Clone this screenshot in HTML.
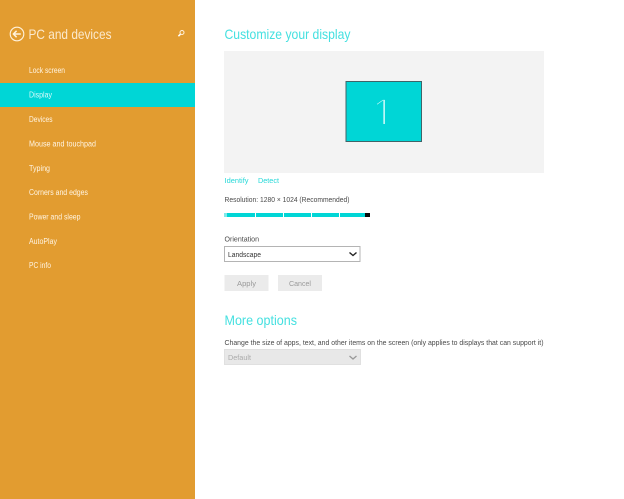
<!DOCTYPE html>
<html>
<head>
<meta charset="utf-8">
<style>
html,body{margin:0;padding:0;background:#fff;width:624px;height:499px;overflow:hidden}
svg{display:block;filter:blur(0.3px)}
text{font-family:"Liberation Sans",sans-serif}
.n{font-size:7.8px;fill:#fff4e2}
.h{font-size:14px;fill:#45e0e0}
.d{font-size:7.6px;fill:#4a4a4a}
</style>
</head>
<body>
<svg width="624" height="499" viewBox="0 0 624 499" xmlns="http://www.w3.org/2000/svg">
<defs><clipPath id="c"><rect x="346" y="82" width="75" height="42"/></clipPath></defs>
<rect x="0" y="0" width="624" height="499" fill="#fff"/>
<rect x="0" y="0" width="195" height="499" fill="#e29c30"/>
<rect x="0" y="83" width="195" height="24" fill="#00d6d6"/>

<circle cx="17" cy="34" r="6.8" fill="none" stroke="#fff2dc" stroke-width="1.1"/>
<path d="M20.8 34H13.6M16.6 30.8L13.4 34L16.6 37.2" fill="none" stroke="#fff2dc" stroke-width="1.5"/>
<text x="28.5" y="39" textLength="83" lengthAdjust="spacingAndGlyphs" style="font-size:14px;fill:#fbe9cd">PC and devices</text>
<circle cx="182" cy="32.5" r="2" fill="none" stroke="#fff2dc" stroke-width="1"/>
<path d="M180.4 34.2L178.4 36.2" stroke="#fff" stroke-width="1.5"/>

<text class="n" x="29" y="73" textLength="36" lengthAdjust="spacingAndGlyphs">Lock screen</text>
<text class="n" x="29" y="97.5" textLength="23" lengthAdjust="spacingAndGlyphs" style="fill:#d8fbfb">Display</text>
<text class="n" x="29" y="122" textLength="23.5" lengthAdjust="spacingAndGlyphs">Devices</text>
<text class="n" x="29" y="146.5" textLength="67" lengthAdjust="spacingAndGlyphs">Mouse and touchpad</text>
<text class="n" x="29" y="171" textLength="21" lengthAdjust="spacingAndGlyphs">Typing</text>
<text class="n" x="29" y="195" textLength="59" lengthAdjust="spacingAndGlyphs">Corners and edges</text>
<text class="n" x="29" y="219.5" textLength="51.5" lengthAdjust="spacingAndGlyphs">Power and sleep</text>
<text class="n" x="29" y="244" textLength="28" lengthAdjust="spacingAndGlyphs">AutoPlay</text>
<text class="n" x="29" y="268" textLength="22" lengthAdjust="spacingAndGlyphs">PC info</text>

<text class="h" x="224.5" y="39" textLength="126" lengthAdjust="spacingAndGlyphs">Customize your display</text>
<rect x="224" y="51" width="320" height="122" fill="#f3f3f3"/>
<rect x="346" y="81.5" width="75.5" height="60" fill="#00d6d6" stroke="#3f6468" stroke-width="1"/>
<text x="372" y="127" clip-path="url(#c)" style="font-size:41px;fill:#e4fdfd;stroke:#00d6d6;stroke-width:2.2px">1</text>

<text class="d" x="224.5" y="183" textLength="24" lengthAdjust="spacingAndGlyphs" style="fill:#25d8d8">Identify</text>
<text class="d" x="258" y="183" textLength="21" lengthAdjust="spacingAndGlyphs" style="fill:#25d8d8">Detect</text>
<text class="d" x="224.5" y="202" textLength="125" lengthAdjust="spacingAndGlyphs">Resolution: 1280 × 1024 (Recommended)</text>

<rect x="224.5" y="213" width="140.5" height="4" fill="#00d6d6"/>
<rect x="365" y="213" width="5" height="4" fill="#0a0a0a"/>
<path d="M226 213v4M255.5 213v4M283.5 213v4M311.5 213v4M339.5 213v4" stroke="#fff" stroke-width="1"/>

<text class="d" x="224.5" y="241.5" textLength="34.5" lengthAdjust="spacingAndGlyphs">Orientation</text>
<rect x="224.5" y="246.5" width="135.5" height="15" fill="#fff" stroke="#b4b4b4" stroke-width="1"/>
<text class="d" x="228" y="257" textLength="33" lengthAdjust="spacingAndGlyphs" style="fill:#333">Landscape</text>
<path d="M349.5 252.5L353 255.5L356.5 252.5" fill="none" stroke="#222" stroke-width="1.4"/>

<rect x="224.5" y="275" width="44" height="16" fill="#ebebeb"/>
<rect x="278" y="275" width="44" height="16" fill="#ebebeb"/>
<text class="d" x="237" y="286" textLength="19" lengthAdjust="spacingAndGlyphs" style="fill:#9a9a9a">Apply</text>
<text class="d" x="289" y="286" textLength="22" lengthAdjust="spacingAndGlyphs" style="fill:#9a9a9a">Cancel</text>

<text class="h" x="224.5" y="325" textLength="72.5" lengthAdjust="spacingAndGlyphs">More options</text>
<text class="d" x="224.5" y="345" textLength="319" lengthAdjust="spacingAndGlyphs">Change the size of apps, text, and other items on the screen (only applies to displays that can support it)</text>
<rect x="224.5" y="349.5" width="136" height="15" fill="#e8e8e8" stroke="#e0e0e0" stroke-width="1"/>
<text class="d" x="228" y="360" textLength="23" lengthAdjust="spacingAndGlyphs" style="fill:#aaa">Default</text>
<path d="M349.5 356L353 359L356.5 356" fill="none" stroke="#999" stroke-width="1.3"/>
</svg>
</body>
</html>
